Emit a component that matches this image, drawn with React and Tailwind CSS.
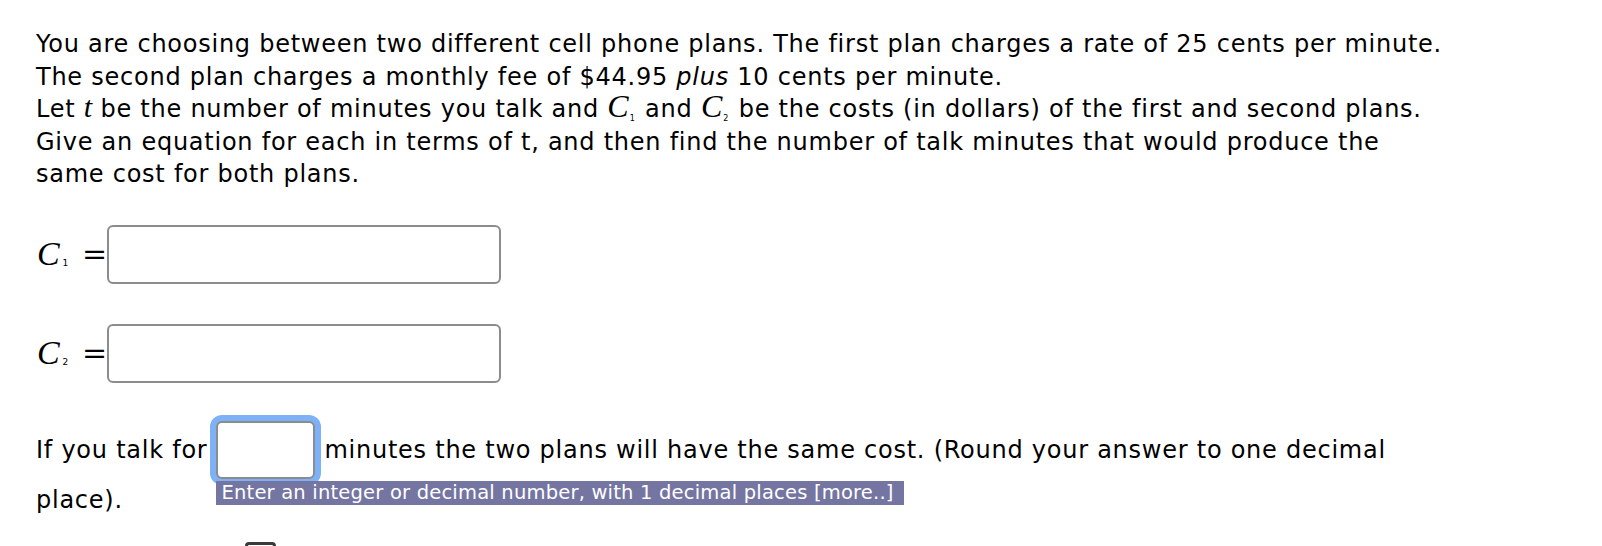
import React from "react";

function MathC({ n }) {
  return (
    <span className="font-['Liberation_Serif',serif] italic text-[32px] leading-[0px] tracking-normal">
      C
      <span className="not-italic text-[8px] leading-[0px] align-[-4px] font-['DejaVu_Sans',sans-serif] ml-[1px] mr-[2px]">{n}</span>
    </span>
  );
}

function EqRow({ n }) {
  return (
    <div className="flex items-center h-[59px]">
      <div className="flex items-center w-[71px] pl-[1px]">
        <span className="font-['Liberation_Serif',serif] italic text-[34px] leading-none">C</span>
        <span className="text-[9px] leading-none mt-[18px] ml-[2px] font-['DejaVu_Sans',sans-serif]">{n}</span>
        <span className="ml-auto font-['DejaVu_Serif',serif] text-[30px] leading-none -mr-[1px]">=</span>
      </div>
      <div className="w-[394px] h-[59px] border-2 border-[#8c8c8c] rounded-[6px] bg-white" />
    </div>
  );
}

export default function App() {
  return (
    <div className="bg-white w-[1602px] h-[546px] overflow-hidden pl-[36px] pt-[28px] text-black font-['DejaVu_Sans',sans-serif] text-[24px] tracking-[0.75px]">
      <div className="leading-[32.5px] whitespace-nowrap">
        <div>You are choosing between two different cell phone plans. The first plan charges a rate of 25 cents per minute.</div>
        <div>
          The second plan charges a monthly fee of $44.95 <span className="italic">plus</span> 10 cents per minute.
        </div>
        <div className="h-[32.5px]">
          Let <span className="font-['Liberation_Serif',serif] italic text-[30px] leading-[0px] tracking-normal">t</span> be the number of minutes you talk and <MathC n="1" /> and <MathC n="2" /> be the costs (in dollars) of the first and second plans.
        </div>
        <div>Give an equation for each in terms of t, and then find the number of talk minutes that would produce the</div>
        <div>same cost for both plans.</div>
      </div>

      <div className="mt-[34px]">
        <EqRow n="1" />
      </div>
      <div className="mt-[40px]">
        <EqRow n="2" />
      </div>

      <div className="mt-[38px] whitespace-nowrap">
        <div className="flex items-center h-[58px]">
          <span>If you talk for</span>
          <span className="relative ml-[9px] mr-[9px]">
            <span className="block w-[99px] h-[58px] border-2 border-[#8c8c8c] rounded-[6px] bg-white shadow-[0_0_0_6px_#7fb1f6]" />
            <span className="absolute left-0 top-[60px] h-[24px] bg-[#7575a2] text-white text-[19.5px] leading-[24px] tracking-[0.2px] pl-[5px] pr-[10px] whitespace-nowrap">
              Enter an integer or decimal number, with 1 decimal places [more..]
            </span>
          </span>
          <span>minutes the two plans will have the same cost. (Round your answer to one decimal</span>
        </div>
        <div className="leading-[32px] mt-[5px]">place).</div>
      </div>

      <div className="ml-[209px] mt-[26px] w-[31px] h-[20px] border-[3px] border-[#3a3a3a] rounded-[4px]" />
    </div>
  );
}
